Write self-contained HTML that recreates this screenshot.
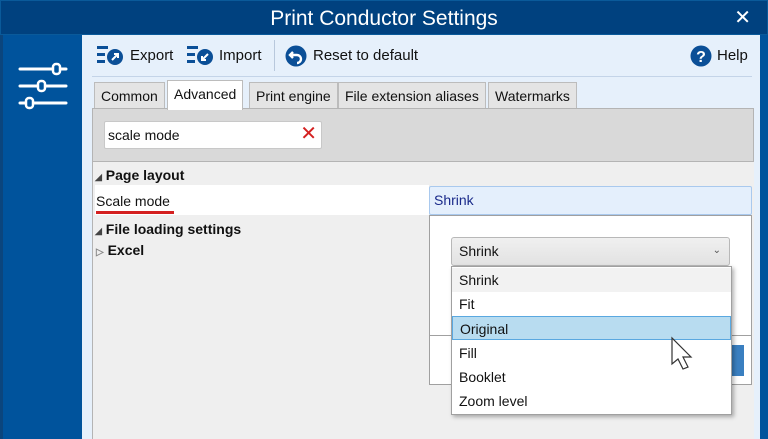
<!DOCTYPE html>
<html><head><meta charset="utf-8"><style>
*{margin:0;padding:0;box-sizing:border-box}
body{width:768px;height:439px;overflow:hidden;font-family:"Liberation Sans",sans-serif;font-size:14px;color:#111;background:#e6f0fb;position:relative}
.a{position:absolute}
.title{left:0;top:0;width:768px;height:35px;background:#00417f;color:#fff;font-size:21px;text-align:center;line-height:35px;border:1px solid #0a5a9a}
.side{left:0;top:35px;width:82px;height:404px;background:#00539c;border-left:3px solid #0b457d}
.tab{top:82px;height:27px;background:#e4e4e4;border:1px solid #bcbcbc;border-bottom:none;line-height:26px;padding:0 6px;font-size:14px}
.row{font-size:14px;line-height:20px}
.b{font-weight:bold}
.item{left:452px;width:279px;height:24px;line-height:24px;padding-left:7px}
</style></head><body>
<div class="a title">Print Conductor Settings<span style="position:absolute;right:16px;top:0;font-size:20px">✕</span></div>
<div class="a side">
<svg width="82" height="90" style="position:absolute;left:-3px;top:20px">
<g stroke="#fff" stroke-width="3" fill="none" stroke-linecap="round">
<line x1="20" y1="14" x2="66" y2="14"/><line x1="20" y1="31" x2="66" y2="31"/><line x1="20" y1="48" x2="66" y2="48"/></g>
<g fill="#00539c" stroke="#fff" stroke-width="2.5"><rect x="53" y="9" width="7" height="10" rx="3"/><rect x="38" y="26" width="7" height="10" rx="3"/><rect x="26" y="43" width="7" height="10" rx="3"/></g></svg>
</div>
<!-- right border -->
<div class="a" style="left:755px;top:35px;width:13px;height:404px;background:#e6f0fb;border-right:8px solid #00539c"></div>
<!-- toolbar -->
<svg class="a" style="left:96px;top:44px" width="30" height="22"><g fill="#0b4f97"><rect x="1" y="2" width="11" height="3"/><rect x="1" y="9" width="8" height="3"/><rect x="1" y="16" width="8" height="3"/><circle cx="19" cy="13" r="8"/></g><path d="M16 16l6-6M18 10h4v4" stroke="#fff" stroke-width="2" fill="none"/></svg>
<div class="a" style="left:130px;top:47px;font-size:15px">Export</div>
<svg class="a" style="left:186px;top:44px" width="30" height="22"><g fill="#0b4f97"><rect x="1" y="2" width="11" height="3"/><rect x="1" y="9" width="8" height="3"/><rect x="1" y="16" width="8" height="3"/><circle cx="19" cy="13" r="8"/></g><path d="M22 10l-6 6M16 12v4h4" stroke="#fff" stroke-width="2" fill="none"/></svg>
<div class="a" style="left:219px;top:47px;font-size:15px">Import</div>
<div class="a" style="left:274px;top:40px;width:1px;height:31px;background:#b8c8dc"></div>
<svg class="a" style="left:285px;top:45px" width="22" height="22"><circle cx="11" cy="11" r="10.5" fill="#0b4f97"/><path d="M8 7l-3 3 3 3M5 10h7a4 4 0 0 1 0 8" stroke="#fff" stroke-width="2.4" fill="none"/></svg>
<div class="a" style="left:313px;top:47px;font-size:15px">Reset to default</div>
<svg class="a" style="left:690px;top:45px" width="22" height="22"><circle cx="11" cy="11" r="10.5" fill="#0b4f97"/><text x="11" y="17" fill="#fff" font-size="16" font-weight="bold" text-anchor="middle" font-family="Liberation Sans">?</text></svg>
<div class="a" style="left:717px;top:47px;font-size:15px">Help</div>
<div class="a" style="left:92px;top:76px;width:660px;height:1px;background:#c4d4e8"></div>
<!-- tabs -->
<div class="a tab" style="left:94px">Common</div>
<div class="a tab" style="left:167px;top:80px;height:30px;background:#fff;z-index:2">Advanced</div>
<div class="a tab" style="left:249px">Print engine</div>
<div class="a tab" style="left:338px">File extension aliases</div>
<div class="a tab" style="left:488px">Watermarks</div>
<!-- panel -->
<div class="a" style="left:92px;top:108px;width:662px;height:54px;background:#d9d9d9;border:1px solid #b4b4b4"></div>
<div class="a" style="left:104px;top:121px;width:218px;height:28px;background:#fff;border:1px solid #c8c8c8;border-radius:2px;line-height:26px;padding-left:3px">scale mode<span style="position:absolute;right:4px;top:-1px;color:#d42020;font-size:20px">✕</span></div>
<div class="a" style="left:92px;top:162px;width:662px;height:277px;background:#efefef;border-left:1px solid #b4b4b4"></div>
<div class="a row b" style="left:95px;top:165px"><span style="font-size:9px;color:#444">◢</span> Page layout</div>
<div class="a" style="left:95px;top:185px;width:334px;height:30px;background:#fff"></div>
<div class="a row" style="left:96px;top:191px">Scale mode</div>
<div class="a" style="left:96px;top:211px;width:78px;height:3px;background:#d42020"></div>
<div class="a row b" style="left:95px;top:219px"><span style="font-size:9px;color:#444">◢</span> File loading settings</div>
<div class="a row b" style="left:96px;top:240px"><span style="font-size:10px;color:#888">▷</span> Excel</div>
<div class="a" style="left:429px;top:186px;width:323px;height:29px;background:#e4effc;border:1px solid #a9c9ee;border-radius:2px;color:#1a2a8a;line-height:27px;padding-left:4px">Shrink</div>
<div class="a" style="left:429px;top:215px;width:323px;height:170px;background:#fff;border:1px solid #a0a0a0"></div>
<div class="a" style="left:429px;top:335px;width:323px;height:1px;background:#a0a0a0"></div>
<div class="a" style="left:730px;top:345px;width:14px;height:31px;background:#3a7fc0"></div>
<div class="a" style="left:451px;top:237px;width:279px;height:29px;background:linear-gradient(#f0f0f0,#e2e2e2);border:1px solid #b8b8b8;border-radius:3px;line-height:27px;padding-left:7px">Shrink<span style="position:absolute;right:8px;top:-1px;font-size:10px;color:#555">⌄</span></div>
<div class="a" style="left:451px;top:266px;width:281px;height:149px;background:#fff;border:1px solid #a0a0a0;box-shadow:2px 2px 4px rgba(0,0,0,.3)"></div>
<div class="a item" style="top:268px;background:#f2f2f2">Shrink</div>
<div class="a item" style="top:292px">Fit</div>
<div class="a item" style="top:316px;background:#b8dcf0;border:1px solid #5aa8e0">Original</div>
<div class="a item" style="top:341px">Fill</div>
<div class="a item" style="top:365px">Booklet</div>
<div class="a item" style="top:389px">Zoom level</div>
<svg class="a" style="left:670px;top:336px" width="30" height="40"><path d="M2 2v26l6-5 5 10 5-2-5-10h8z" fill="#fff" stroke="#333" stroke-width="1.2"/></svg>
</body></html>
